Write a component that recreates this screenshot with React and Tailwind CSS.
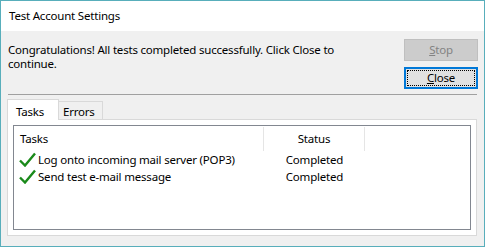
import React from 'react';

const font = { fontFamily: '"Segoe UI", "Noto Sans", sans-serif' };

function Check() {
  return (
    <svg width="17" height="15" viewBox="0 0 17 15" className="shrink-0">
      <path d="M1 8.5 L6 13.5 L16 1.5" fill="none" stroke="#1a8a1a" strokeWidth="2.4" strokeLinejoin="miter" />
    </svg>
  );
}

const rows = [
  { task: 'Log onto incoming mail server (POP3)', status: 'Completed' },
  { task: 'Send test e-mail message', status: 'Completed' },
];

export default function App() {
  return (
    <div
      className="w-[485px] h-[247px] border border-[#58aebb] bg-[#f0f0f0] flex flex-col text-[11.5px] tracking-[-0.2px] text-black"
      style={font}
    >
      <div className="h-[30px] bg-white flex items-center pl-[8px] shrink-0">
        <span className="text-[11.5px] leading-none">Test Account Settings</span>
      </div>

      <div className="flex pl-[7px] pr-[6px] pt-[8px]">
        <div className="flex-1 pt-[4px] leading-[14px]">
          <div>Congratulations! All tests completed successfully. Click Close to</div>
          <div>continue.</div>
        </div>
        <div className="flex flex-col gap-[6px] w-[74px]">
          <button className="h-[22px] bg-[#cccccc] border border-[#bfbfbf] text-[#838383] leading-none">
            <span className="underline">S</span>top
          </button>
          <button className="h-[22px] bg-[#e1e1e1] border-2 border-[#0078d7] p-px leading-none">
            <span className="flex h-full items-center justify-center border border-dotted border-black">
              <span><span className="underline">C</span>lose</span>
            </span>
          </button>
        </div>
      </div>

      <div className="mx-[7px] mt-[5px] h-px bg-[#a0a0a0]" />

      <div className="mx-[6px] mt-[3px] flex flex-col">
        <div className="flex items-end h-[21px]">
          <div className="h-[21px] w-[52px] bg-white border border-b-0 border-[#d9d9d9] -mb-px relative z-10 pl-[8px] pt-[3px]">
            Tasks
          </div>
          <div className="h-[18px] w-[44px] bg-[#f0f0f0] border border-l-0 border-b-0 border-[#d9d9d9] pl-[4px] pt-[1px]">
            Errors
          </div>
        </div>
        <div className="h-[117px] w-[470px] bg-white border border-[#d9d9d9] p-[5px]">
          <div className="h-full border border-[#828790] bg-white">
            <div className="flex h-[25px] items-stretch pt-px">
              <div className="w-[250px] border-r border-[#e5e5e5] pl-[6px] flex items-center">Tasks</div>
              <div className="w-[101px] border-r border-[#e5e5e5] flex items-center justify-center">Status</div>
            </div>
            {rows.map((r) => (
              <div key={r.task} className="flex h-[17px] items-center">
                <div className="w-[250px] flex items-center pl-[5px] gap-[2px]">
                  <Check />
                  <span>{r.task}</span>
                </div>
                <div className="w-[101px] text-center">{r.status}</div>
              </div>
            ))}
          </div>
        </div>
      </div>
    </div>
  );
}
